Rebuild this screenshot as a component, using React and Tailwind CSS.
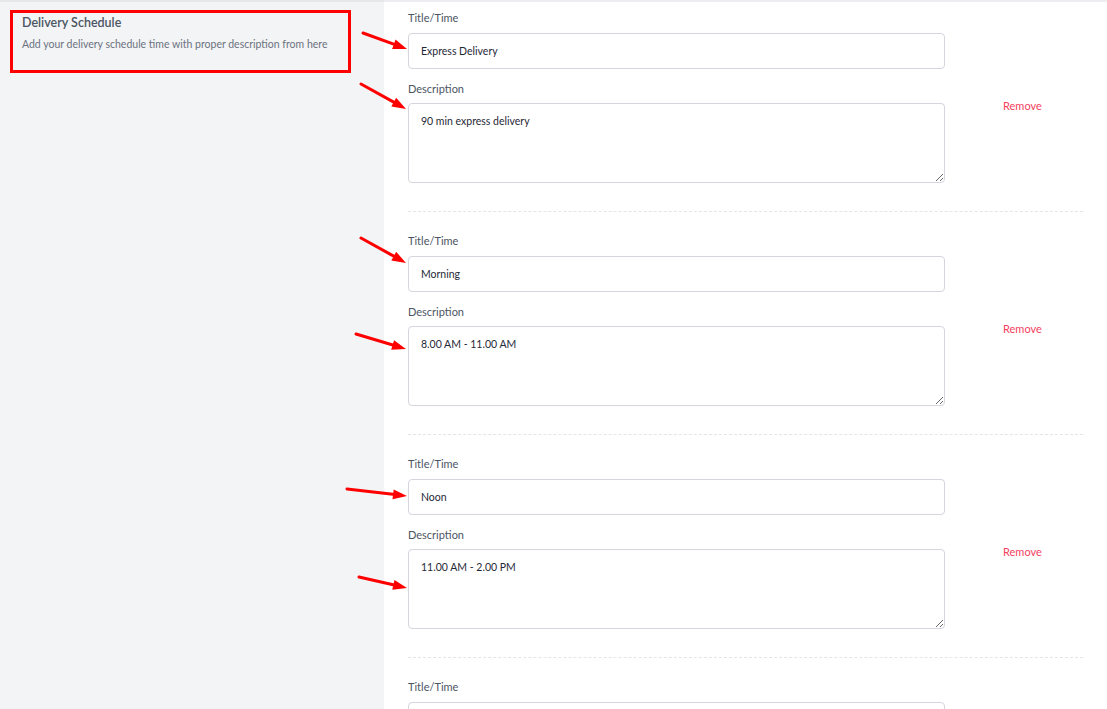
import React from 'react';

const schedules = [
    { title: 'Express Delivery', description: '90 min express delivery' },
    { title: 'Morning', description: '8.00 AM - 11.00 AM' },
    { title: 'Noon', description: '11.00 AM - 2.00 PM' },
    { title: '', description: '' },
];

// annotation arrows: [fromX, fromY, toX, toY]
const arrows = [
    [363, 33, 407, 49],
    [361, 84, 406, 109],
    [361, 238, 406, 263],
    [356, 334, 406, 349],
    [347, 489, 407, 496],
    [359, 577, 407, 588],
];

function Arrow({ a }) {
    const [x1, y1, x2, y2] = a;
    const dx = x2 - x1;
    const dy = y2 - y1;
    const len = Math.sqrt(dx * dx + dy * dy);
    const ux = dx / len;
    const uy = dy / len;
    const headLen = 14;
    const headW = 5;
    const bx = x2 - ux * headLen;
    const by = y2 - uy * headLen;
    const p1 = `${bx - uy * headW},${by + ux * headW}`;
    const p2 = `${bx + uy * headW},${by - ux * headW}`;
    return (
        <g>
            <line x1={x1} y1={y1} x2={bx + ux * 2} y2={by + uy * 2} stroke="#ff0000" strokeWidth="3" strokeLinecap="round" />
            <polygon points={`${x2},${y2} ${p1} ${p2}`} fill="#ff0000" />
        </g>
    );
}

function ScheduleItem({ item, first }) {
    return (
        <div className={`flex w-[675px] border-b border-dashed border-[#e3e5e9] pb-[28px] ${first ? 'pt-[8px]' : 'pt-[21px]'}`}>
            <div className="w-[537px] flex flex-col">
                <label className="text-[11px] leading-[16px] text-[#4b5563] mb-[7px]">Title/Time</label>
                <input
                    type="text"
                    defaultValue={item.title}
                    className="h-[36px] w-full rounded-[4px] border border-[#d4d5dd] px-[12px] text-[10.5px] text-[#1f2937] outline-none"
                />
                <label className="text-[11px] leading-[16px] text-[#4b5563] mt-[12px] mb-[6px]">Description</label>
                <textarea
                    defaultValue={item.description}
                    className="h-[80px] w-full rounded-[4px] border border-[#d4d5dd] px-[12px] pt-[9px] text-[10.5px] leading-[16px] text-[#1f2937] outline-none"
                />
            </div>
            <button className="self-start mt-[88px] ml-[58px] text-[11px] leading-[16px] text-[#f43f5e]">Remove</button>
        </div>
    );
}

export default function App() {
    return (
        <div className="relative flex min-h-screen w-full bg-white" style={{ fontFamily: 'Lato, "Open Sans", sans-serif' }}>
            <aside className="w-[384px] shrink-0 bg-[#f3f4f6] border-t-2 border-[#e6e7eb] pl-[10px] pt-[8px]">
                <div className="w-[341px] h-[63px] border-[3px] border-[#ff0000] pl-[9px]">
                    <h2 className="text-[12.5px] font-semibold leading-[20px] text-[#4b5563]">Delivery Schedule</h2>
                    <p className="mt-[3px] text-[10.5px] leading-[16px] text-[#6b7280]">Add your delivery schedule time with proper description from here</p>
                </div>
            </aside>
            <main className="flex-1 border-t-2 border-[#eceef1] pl-[24px]">
                {schedules.map((item, i) => (
                    <ScheduleItem key={i} item={item} first={i === 0} />
                ))}
            </main>
            <svg className="pointer-events-none absolute left-0 top-0" width="1107" height="709">
                {arrows.map((a, i) => (
                    <Arrow key={i} a={a} />
                ))}
            </svg>
        </div>
    );
}
